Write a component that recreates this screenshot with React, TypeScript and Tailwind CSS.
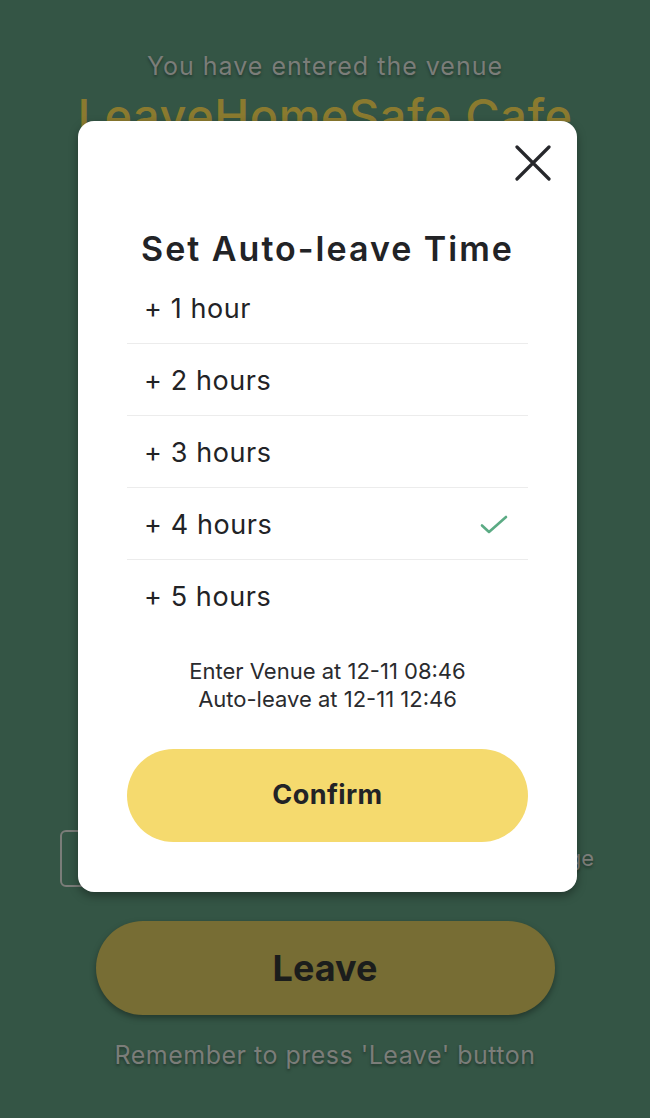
const options = ["+ 1 hour", "+ 2 hours", "+ 3 hours", "+ 4 hours", "+ 5 hours"];

function CloseIcon() {
  return (
    <svg width="36" height="36" viewBox="0 0 36 36" fill="none">
      <path d="M2 2L34 34M34 2L2 34" stroke="#26272b" strokeWidth="3.2" strokeLinecap="round" />
    </svg>
  );
}

function CheckIcon() {
  return (
    <svg width="28" height="22" viewBox="0 0 28 22" fill="none">
      <path d="M2 11.5L9 18L26 3" stroke="#5bab84" strokeWidth="2.6" strokeLinecap="round" strokeLinejoin="round" />
    </svg>
  );
}

export default function App() {
  const selected = 3;
  return (
    <div className="relative h-[1118px] w-full overflow-hidden bg-[#345545] font-['Inter',sans-serif]">
      {/* venue screen behind the dialog */}
      <div className="flex flex-col items-center pt-[49px]">
        <p className="text-[25px] leading-[34px] tracking-[1px] text-[#7b7d79] [text-shadow:0_2px_3px_rgba(0,0,0,0.35)]">
          You have entered the venue
        </p>
        <h1 className="mt-[6px] whitespace-nowrap text-[47px] font-medium leading-[54px] tracking-[0.5px] text-[#8a7a2f]">
          LeaveHomeSafe Cafe
        </h1>
      </div>
      <div className="mt-[687px] flex items-center justify-between pl-[60px] pr-[56px]">
        <div className="h-[57px] w-[30px] shrink-0 rounded-[6px] border-2 border-[#7b7d79]" />
        <span className="whitespace-nowrap text-[22px] text-[#7b7d79] [text-shadow:0_2px_3px_rgba(0,0,0,0.35)]">
          Show auto-leave reminder message
        </span>
      </div>
      <div className="mt-[34px] flex flex-col items-center">
        <button className="flex h-[94px] w-[459px] items-center justify-center rounded-full bg-[#776d34] text-[36px] font-bold text-[#1b1d1c] shadow-[0_3px_6px_rgba(0,0,0,0.35)]">
          Leave
        </button>
        <p className="mt-[22px] text-[25px] tracking-[0.5px] text-[#7b7d79] [text-shadow:0_2px_3px_rgba(0,0,0,0.35)]">
          Remember to press 'Leave' button
        </p>
      </div>

      {/* auto-leave dialog */}
      <div className="absolute inset-0 pl-[78px] pt-[121px]">
        <div className="flex w-[499px] flex-col rounded-[16px] bg-white px-[49px] pb-[50px] shadow-[0_4px_10px_rgba(0,0,0,0.35)]">
          <div className="-mr-[23px] flex justify-end pt-[24px]">
            <CloseIcon />
          </div>
          <h2 className="mt-[48px] whitespace-nowrap text-center text-[34px] font-semibold leading-[40px] tracking-[2px] text-[#222326]">
            Set Auto-leave Time
          </h2>
          <ul className="mt-[3px]">
            {options.map((o, i) => (
              <li
                key={o}
                className={`flex h-[72px] items-center justify-between pl-[17px] pr-[20px] pt-[3px] text-[27px] tracking-[0.6px] text-[#222326] ${
                  i < options.length - 1 ? "border-b border-[#ececec]" : ""
                }`}
              >
                <span>{o}</span>
                {i === selected && <CheckIcon />}
              </li>
            ))}
          </ul>
          <div className="mt-[25px] text-center text-[22px] leading-[28px] text-[#2a2b2e]">
            <p>Enter Venue at 12-11 08:46</p>
            <p>Auto-leave at 12-11 12:46</p>
          </div>
          <button className="mt-[36px] flex h-[93px] items-center justify-center rounded-full bg-[#f5da6e] text-[27px] font-bold tracking-[0.4px] text-[#222326]">
            Confirm
          </button>
        </div>
      </div>
    </div>
  );
}
